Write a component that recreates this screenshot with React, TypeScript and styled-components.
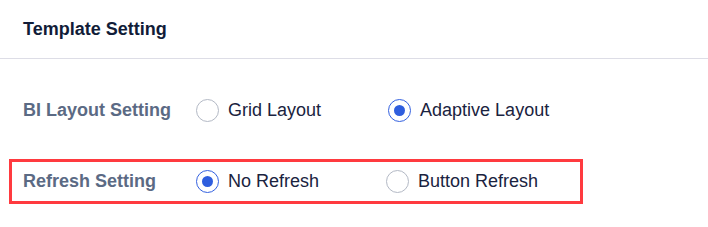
import React, { useState } from 'react'
import styled, { createGlobalStyle } from 'styled-components'

const GlobalStyle = createGlobalStyle`
    html, body {
        margin: 0;
        padding: 0;
        background: #ffffff;
    }
    body {
        font-family: "Liberation Sans", Arial, sans-serif;
    }
`

type Option = { value: string; label: string }

const settings: { key: string; label: string; options: Option[]; initial: string; highlighted?: boolean }[] = [
    {
        key: 'layout',
        label: 'BI Layout Setting',
        options: [
            { value: 'grid', label: 'Grid Layout' },
            { value: 'adaptive', label: 'Adaptive Layout' },
        ],
        initial: 'adaptive',
    },
    {
        key: 'refresh',
        label: 'Refresh Setting',
        options: [
            { value: 'none', label: 'No Refresh' },
            { value: 'button', label: 'Button Refresh' },
        ],
        initial: 'none',
        highlighted: true,
    },
]

export default function App() {
    const [values, setValues] = useState<Record<string, string>>(
        Object.fromEntries(settings.map((s) => [s.key, s.initial]))
    )

    return (
        <Page>
            <GlobalStyle />
            <Header>
                <Title>Template Setting</Title>
            </Header>
            <Body>
                {settings.map((setting) => (
                    <Row key={setting.key} highlighted={setting.highlighted}>
                        <Label>{setting.label}</Label>
                        <RadioGroup>
                            {setting.options.map((opt) => {
                                const checked = values[setting.key] === opt.value
                                return (
                                    <RadioItem
                                        key={opt.value}
                                        onClick={() => setValues({ ...values, [setting.key]: opt.value })}
                                    >
                                        <RadioCircle checked={checked} />
                                        <RadioText>{opt.label}</RadioText>
                                    </RadioItem>
                                )
                            })}
                        </RadioGroup>
                    </Row>
                ))}
            </Body>
        </Page>
    )
}

const Page = styled.div`
    width: 708px;
    height: 227px;
    background: #ffffff;
`

const Header = styled.div`
    height: 58px;
    display: flex;
    align-items: center;
    padding-left: 23px;
    border-bottom: 1px solid #dddde6;
`

const Title = styled.div`
    font-size: 18px;
    font-weight: 700;
    color: #111c38;
    white-space: nowrap;
`

const Body = styled.div`
    display: flex;
    flex-direction: column;
    gap: 26px;
    padding: 29px 0 0 9px;
`

const Row = styled.div<{ highlighted?: boolean }>`
    display: flex;
    align-items: center;
    box-sizing: border-box;
    width: 574px;
    height: 45px;
    padding-left: 11px;
    border: 3px solid ${({ highlighted }) => (highlighted ? '#ff3a3f' : 'transparent')};
`

const Label = styled.div`
    width: 173px;
    flex-shrink: 0;
    font-size: 18px;
    font-weight: 700;
    color: #5b6a84;
    white-space: nowrap;
`

const RadioGroup = styled.div`
    display: flex;
    align-items: center;
    flex-shrink: 0;
`

const RadioItem = styled.label`
    display: flex;
    align-items: center;
    flex-shrink: 0;
    gap: 9px;
    margin-right: 67px;
    cursor: pointer;
`

const RadioCircle = styled.span<{ checked: boolean }>`
    width: 23px;
    height: 23px;
    flex-shrink: 0;
    box-sizing: border-box;
    border-radius: 50%;
    border: 1px solid ${({ checked }) => (checked ? '#3461e0' : '#b3b9c5')};
    display: flex;
    align-items: center;
    justify-content: center;
    background: #ffffff;

    &::after {
        content: '';
        width: 11px;
        height: 11px;
        border-radius: 50%;
        background: #2f5ede;
        display: ${({ checked }) => (checked ? 'block' : 'none')};
    }
`

const RadioText = styled.span`
    font-size: 18px;
    color: #1a2340;
    white-space: nowrap;
`
